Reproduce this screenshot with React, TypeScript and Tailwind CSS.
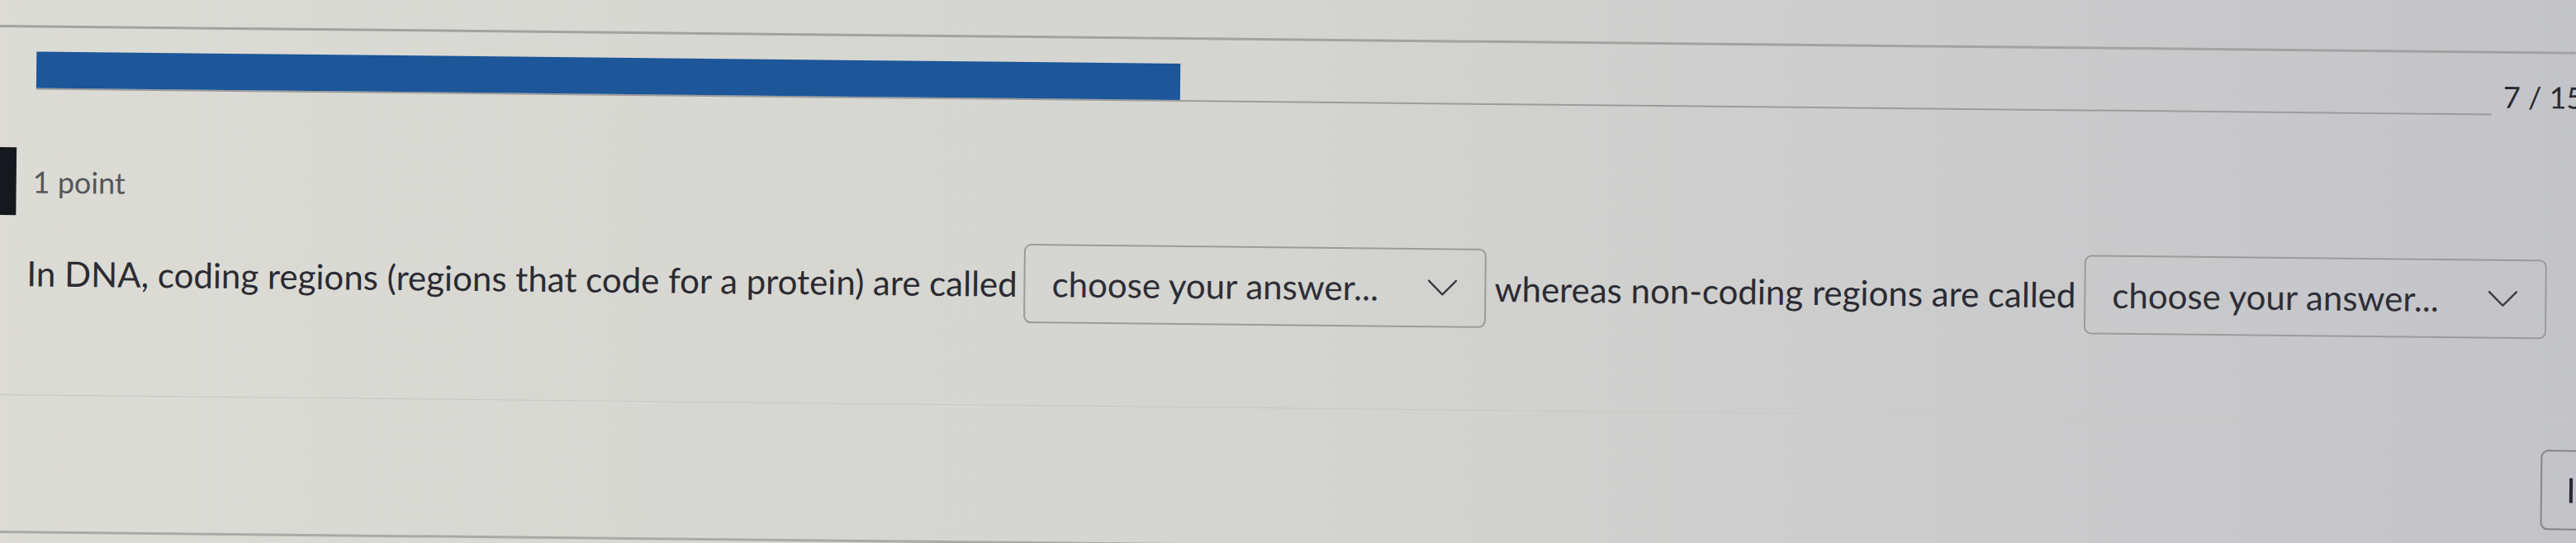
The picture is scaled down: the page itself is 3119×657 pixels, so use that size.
import React from "react";

function Chevron() {
  return (
    <svg width="36" height="20" viewBox="0 0 36 20" fill="none" className="shrink-0">
      <path d="M1.5 1.5 L18 18 L34.5 1.5" stroke="#3a3a42" strokeWidth="2.4" strokeLinecap="round" strokeLinejoin="round" />
    </svg>
  );
}

function Select() {
  return (
    <div className="flex h-[96px] w-[560px] shrink-0 items-center justify-between rounded-[9px] border-2 border-[#9b9b9b] pl-[32px] pr-[33px]">
      <span className="text-[42px] leading-none text-[#2e2e36]">choose your answer...</span>
      <Chevron />
    </div>
  );
}

export default function App() {
  return (
    <div className="h-[657px] w-[3119px] overflow-hidden bg-gradient-to-r from-[#dcdbd5] via-[#d4d4d0] to-[#c3c4c9] font-['Lato',sans-serif]">
      <div className="w-[3119px] origin-top-left rotate-[0.6deg]">
        <div className="pt-[30px]">
          <div className="h-[3px] w-full bg-[#a2a2a0]" />
        </div>

        <div className="mt-[29px] flex items-start pl-[45px]">
          <div className="flex h-[46px] w-[2973px] shrink-0 items-start border-b-2 border-[#9c9c9b]">
            <div className="h-[44px] w-[1385px] bg-[#1d5699]" />
          </div>
          <span className="ml-[14px] mt-[5px] whitespace-nowrap text-[36px] leading-none text-[#2a2a30]">7 / 15</span>
        </div>

        <div className="mt-[70px] flex items-center">
          <div className="h-[82px] w-[22px] shrink-0 bg-[#15181c]" />
          <span className="ml-[20px] text-[36px] leading-none text-[#55565a]">1 point</span>
        </div>

        <div className="mt-[22px] flex items-center whitespace-nowrap pl-[36px] text-[#2b2b32]">
          <span className="text-[42px] leading-none">In DNA, coding regions (regions that code for a protein) are called</span>
          <div className="ml-[8px]">
            <Select />
          </div>
          <span className="ml-[10px] text-[42px] leading-none">whereas non-coding regions are called</span>
          <div className="ml-[10px]">
            <Select />
          </div>
        </div>

        <div className="mt-[99px] h-px w-full bg-[#c8c8c3]" />

        <div className="mt-[34px] pl-[3082px]">
          <div className="flex h-[97px] w-[100px] items-center rounded-[9px] border-2 border-[#85868a] pl-[33px]">
            <div className="h-[30px] w-[4px] bg-[#2a2436]" />
          </div>
        </div>

        <div className="mt-[33px] h-[3px] w-full bg-[#a9a9a6]" />
      </div>
    </div>
  );
}
